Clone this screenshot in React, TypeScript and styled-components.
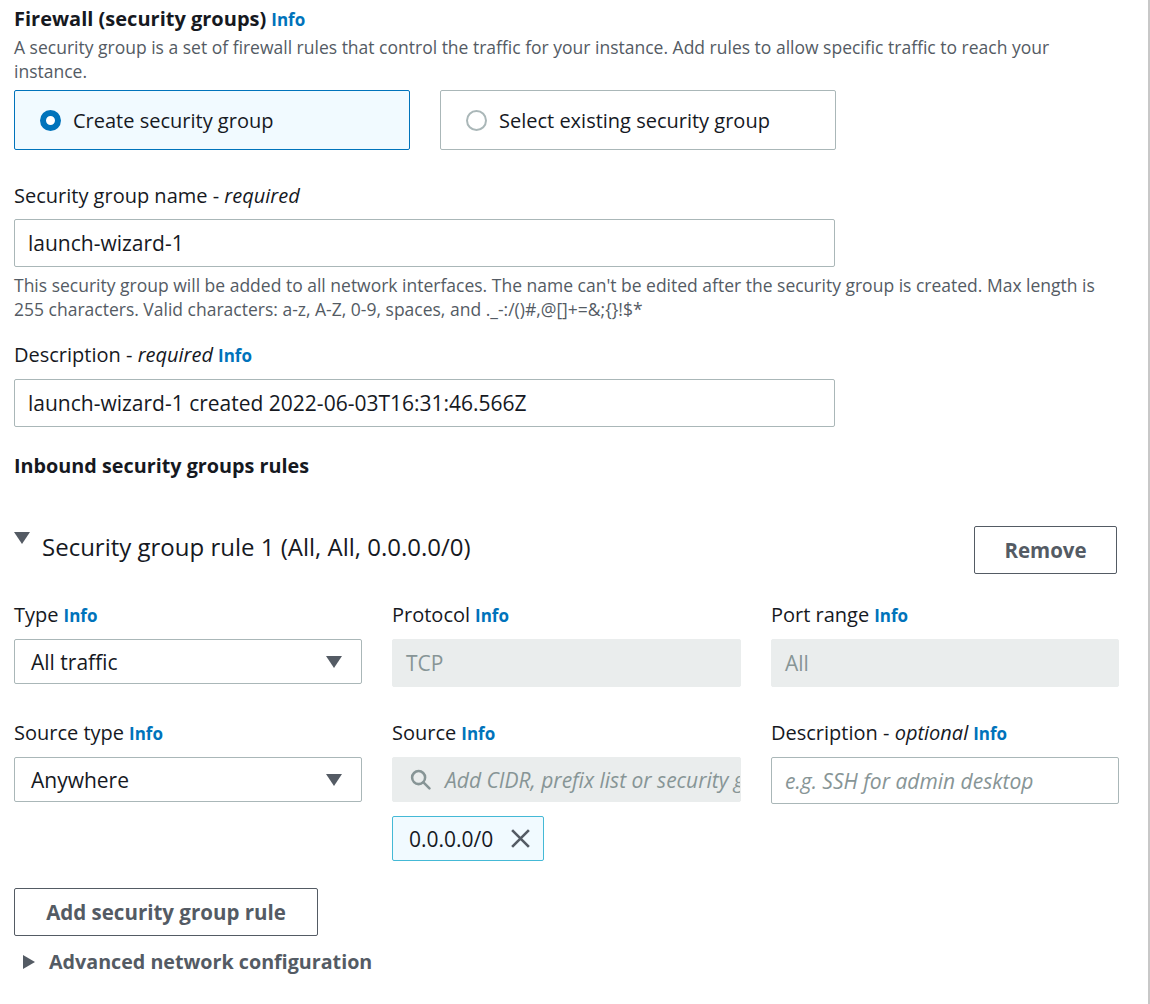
import styled, { createGlobalStyle } from "styled-components";

const GlobalStyle = createGlobalStyle`
  body {
    margin: 0;
    background: #fff;
    font-family: "Open Sans", "Noto Sans", Arial, sans-serif;
    color: #16191f;
  }
`;

const Page = styled.div`
  box-sizing: border-box;
  width: 1150px;
  min-height: 1004px;
  padding: 4px 29px 40px 14px;
  border-right: 2px solid #c8c8c8;
`;

const Title = styled.h2`
  margin: 0;
  font-size: 20px;
  font-weight: 700;
  line-height: 30px;
`;

const Info = styled.span`
  color: #0073bb;
  font-weight: 700;
  font-style: normal;
  font-size: 17px;
  margin-left: 5px;
`;

const Lead = styled.p`
  margin: 0;
  font-size: 17.5px;
  line-height: 24px;
  color: #545b64;
`;

const Tiles = styled.div`
  display: flex;
  gap: 30px;
  margin-top: 7px;
`;

const Tile = styled.label<{ $selected?: boolean }>`
  box-sizing: border-box;
  width: 396px;
  height: 60px;
  display: flex;
  align-items: center;
  gap: 12px;
  padding-left: 25px;
  border: 1px solid ${(p) => (p.$selected ? "#0073bb" : "#aab7b8")};
  background: ${(p) => (p.$selected ? "#f1faff" : "#fff")};
  border-radius: 2px;
  font-size: 20px;
`;

const Radio = styled.span<{ $checked?: boolean }>`
  box-sizing: border-box;
  width: 21px;
  height: 21px;
  border-radius: 50%;
  border: ${(p) => (p.$checked ? "6.5px solid #0073bb" : "2px solid #aab7b8")};
  background: #fff;
`;

const Field = styled.div<{ $top?: number; $width?: string }>`
  margin-top: ${(p) => p.$top ?? 0}px;
  width: ${(p) => p.$width ?? "auto"};
`;

const Label = styled.div`
  font-size: 20px;
  line-height: 26px;
  margin-bottom: 10px;
  white-space: nowrap;
  em {
    font-style: italic;
  }
`;

const Input = styled.div<{
  $disabled?: boolean;
  $placeholder?: boolean;
  $height?: number;
  $padLeft?: number;
}>`
  box-sizing: border-box;
  height: ${(p) => p.$height ?? 48}px;
  display: flex;
  align-items: center;
  gap: 14px;
  padding: 0 13px 0 ${(p) => p.$padLeft ?? 13}px;
  border-radius: 2px;
  font-size: 21px;
  white-space: nowrap;
  overflow: hidden;
  border: 1px solid ${(p) => (p.$disabled ? "#eaeded" : "#aab7b8")};
  background: ${(p) => (p.$disabled ? "#eaeded" : "#fff")};
  color: ${(p) => (p.$disabled || p.$placeholder ? "#879596" : "#16191f")};
  font-style: ${(p) => (p.$placeholder ? "italic" : "normal")};
  svg {
    flex-shrink: 0;
  }
`;

const Select = styled(Input)`
  height: 45px;
  justify-content: space-between;
  padding: 0 19px 0 16px;
`;

const Caret = styled.span<{ $dir?: "down" | "right" }>`
  flex-shrink: 0;
  width: 0;
  height: 0;
  ${(p) =>
    p.$dir === "right"
      ? `border-top: 7px solid transparent; border-bottom: 7px solid transparent; border-left: 12px solid #545b64;`
      : `border-left: 8px solid transparent; border-right: 8px solid transparent; border-top: 12px solid #545b64;`}
`;

const Help = styled.p`
  margin: 6px 0 0;
  font-size: 17.5px;
  line-height: 24px;
  color: #545b64;
`;

const SubTitle = styled.h3`
  margin: 26px 0 0;
  font-size: 19.8px;
  font-weight: 700;
  line-height: 26px;
`;

const RuleHeader = styled.div`
  display: flex;
  align-items: center;
  justify-content: space-between;
  margin-top: 47px;
  padding-right: 2px;
`;

const RuleTitle = styled.div`
  display: flex;
  align-items: flex-start;
  gap: 12px;
  font-size: 24px;
  line-height: 34px;
  margin-bottom: 6px;
`;

const SmallCaret = styled.span`
  width: 0;
  height: 0;
  margin-top: 2px;
  border-left: 8.5px solid transparent;
  border-right: 8.5px solid transparent;
  border-top: 12px solid #545b64;
`;

const Button = styled.button<{ $width: number }>`
  box-sizing: border-box;
  width: ${(p) => p.$width}px;
  height: 48px;
  background: #fff;
  border: 1px solid #545b64;
  border-radius: 2px;
  font-family: inherit;
  font-size: 20.5px;
  font-weight: 700;
  color: #545b64;
`;

const Grid = styled.div<{ $top: number }>`
  display: grid;
  grid-template-columns: 348px 349px 348px;
  column-gap: 30px;
  margin-top: ${(p) => p.$top}px;
  align-items: start;
`;

const Chip = styled.div`
  box-sizing: border-box;
  display: inline-flex;
  align-items: center;
  gap: 17px;
  height: 45px;
  margin-top: 14px;
  padding: 0 12px 0 16px;
  border: 1px solid #44b9d6;
  border-radius: 2px;
  background: #f1faff;
  font-size: 21px;
`;

const Expand = styled.div`
  display: flex;
  align-items: center;
  gap: 14px;
  margin-top: 12px;
  padding-left: 9px;
  font-size: 19.7px;
  line-height: 28px;
  font-weight: 700;
  color: #545b64;
`;

const SearchIcon = () => (
  <svg width="21" height="21" viewBox="0 0 20 20" fill="none" stroke="#879596" strokeWidth="2.4">
    <circle cx="8.2" cy="8.2" r="6.2" />
    <path d="M12.8 12.8 L18.5 18.5" strokeLinecap="round" />
  </svg>
);

const CloseIcon = () => (
  <svg width="21" height="21" viewBox="0 0 20 20" fill="none" stroke="#545b64" strokeWidth="2.5">
    <path d="M2 2 L18 18 M18 2 L2 18" />
  </svg>
);

const App = () => {
  return (
    <Page>
      <GlobalStyle />
      <Title>
        Firewall (security groups)<Info>Info</Info>
      </Title>
      <Lead>
        A security group is a set of firewall rules that control the traffic for your instance. Add
        rules to allow specific traffic to reach your instance.
      </Lead>
      <Tiles>
        <Tile $selected>
          <Radio $checked />
          Create security group
        </Tile>
        <Tile>
          <Radio />
          Select existing security group
        </Tile>
      </Tiles>

      <Field $top={33} $width="821px">
        <Label>
          Security group name - <em>required</em>
        </Label>
        <Input>launch-wizard-1</Input>
      </Field>
      <Help>
        This security group will be added to all network interfaces. The name can't be edited after
        the security group is created. Max length is 255 characters. Valid characters: a-z, A-Z,
        0-9, spaces, and ._-:/()#,@[]+=&amp;;{"{}"}!$*
      </Help>

      <Field $top={21} $width="821px">
        <Label>
          Description - <em>required</em>
          <Info>Info</Info>
        </Label>
        <Input>launch-wizard-1 created 2022-06-03T16:31:46.566Z</Input>
      </Field>

      <SubTitle>Inbound security groups rules</SubTitle>

      <RuleHeader>
        <RuleTitle>
          <SmallCaret />
          Security group rule 1 (All, All, 0.0.0.0/0)
        </RuleTitle>
        <Button $width={143}>Remove</Button>
      </RuleHeader>

      <Grid $top={28}>
        <Field>
          <Label>
            Type<Info>Info</Info>
          </Label>
          <Select>
            All traffic
            <Caret />
          </Select>
        </Field>
        <Field>
          <Label>
            Protocol<Info>Info</Info>
          </Label>
          <Input $disabled>TCP</Input>
        </Field>
        <Field>
          <Label>
            Port range<Info>Info</Info>
          </Label>
          <Input $disabled>All</Input>
        </Field>
      </Grid>

      <Grid $top={33}>
        <Field>
          <Label>
            Source type<Info>Info</Info>
          </Label>
          <Select>
            Anywhere
            <Caret />
          </Select>
        </Field>
        <Field>
          <Label>
            Source<Info>Info</Info>
          </Label>
          <Input $disabled $placeholder $height={45} $padLeft={17}>
            <SearchIcon />
            Add CIDR, prefix list or security group
          </Input>
          <Chip>
            0.0.0.0/0
            <CloseIcon />
          </Chip>
        </Field>
        <Field>
          <Label>
            Description - <em>optional</em>
            <Info>Info</Info>
          </Label>
          <Input $placeholder $height={47}>
            e.g. SSH for admin desktop
          </Input>
        </Field>
      </Grid>

      <Field $top={27}>
        <Button $width={304}>Add security group rule</Button>
      </Field>
      <Expand>
        <Caret $dir="right" />
        Advanced network configuration
      </Expand>
    </Page>
  );
};

export default App;
